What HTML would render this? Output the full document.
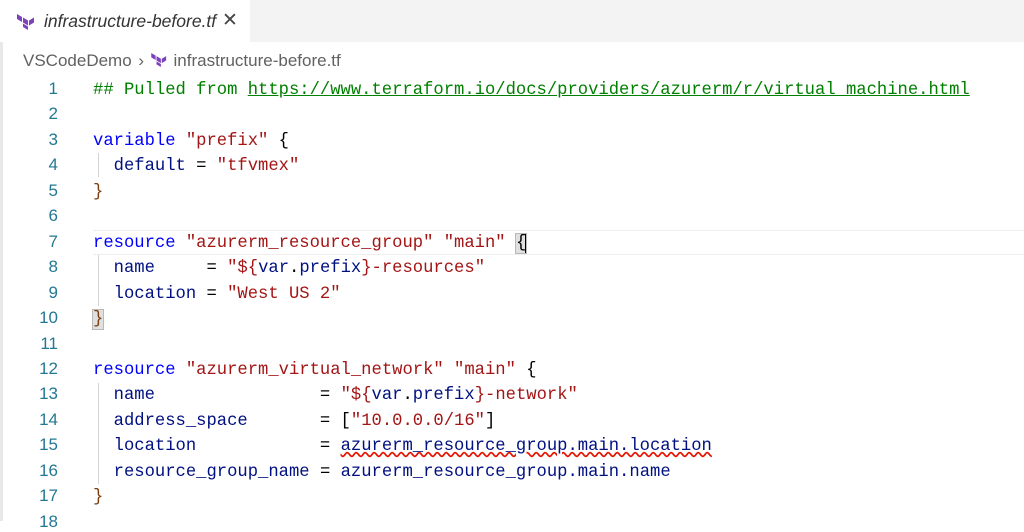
<!DOCTYPE html>
<html><head><meta charset="utf-8"><style>
body{margin:0;width:1024px;height:521px;overflow:hidden;background:#fff;position:relative;font-family:"Liberation Sans",sans-serif}
.tabbar{position:absolute;left:0;top:0;width:1024px;height:42px;background:#f3f3f3}
.tab{position:absolute;left:0;top:0;width:250px;height:42px;background:#fff}
.tab span{position:absolute;left:44px;top:11px;font-size:17.5px;font-style:italic;color:#333}
.tab .x{position:absolute;left:222px;top:9px;font-size:19px;color:#444}
.crumb{position:absolute;left:23px;top:51px;font-size:17px;color:#616161}
.strip{position:absolute;left:0;top:42px;width:3px;height:479px;background:#e8e8e8}
.ln{position:absolute;left:0;width:58px;text-align:right;font-size:17px;color:#237893}
.code{position:absolute;left:93px;font-family:"Liberation Mono",monospace;font-size:17.2px;white-space:pre;color:#000}
.k{color:#0000ff}.s{color:#a31515}.p{color:#001080}.c{color:#008000}.b{color:#7a3e10}
.g{position:absolute;left:98px;width:1px;background:#d3d3d3}
.cur{position:absolute;left:93px;top:230px;width:931px;height:25px;border-top:1px solid #eee;border-bottom:1px solid #eee;box-sizing:border-box}
</style></head><body>
<div class="tabbar"><div class="tab">
<svg style="position:absolute;left:17px;top:14px" width="20" height="16" viewBox="0 0 20 16"><path d="M0 0l5 3v5L0 5z M6 3.5l5 3v5l-5-3z M12 6.5l5-3v5l-5 3z M6 9.5l5 3V16l-5-3z" fill="#7b42bc"/></svg>
<span>infrastructure-before.tf</span><div class="x">✕</div></div></div>
<div class="crumb">VSCodeDemo <span style="margin:0 2px">›</span> <svg width="18" height="14" viewBox="0 0 20 16" style="vertical-align:-1px"><path d="M0 0l5 3v5L0 5z M6 3.5l5 3v5l-5-3z M12 6.5l5-3v5l-5 3z M6 9.5l5 3V16l-5-3z" fill="#7b42bc"/></svg> infrastructure-before.tf</div>
<div class="strip"></div>
<div class="cur"></div>
<div class="g" style="top:153px;height:24px"></div>
<div class="g" style="top:255px;height:51px"></div>
<div class="g" style="top:383px;height:101px"></div>
<div id="l"></div>
<script>
var L=[
'<span class="c">## Pulled from <u style="text-decoration-color:#008000">https://www.terraform.io/docs/providers/azurerm/r/virtual_machine.html</u></span>',
'',
'<span class="k">variable</span> <span class="s">"prefix"</span> {',
'  <span class="p">default</span> = <span class="s">"tfvmex"</span>',
'<span class="b">}</span>',
'',
'<span class="k">resource</span> <span class="s">"azurerm_resource_group"</span> <span class="s">"main"</span> <span style="background:#e0e0e0;outline:1px solid #b9b9b9">{</span><span style="border-left:2px solid #000;margin-left:-1px"></span>',
'  <span class="p">name</span>     = <span class="s">"${</span><span class="p">var</span>.<span class="p">prefix</span><span class="s">}-resources"</span>',
'  <span class="p">location</span> = <span class="s">"West US 2"</span>',
'<span class="b" style="background:#e0e0e0;outline:1px solid #b9b9b9">}</span>',
'',
'<span class="k">resource</span> <span class="s">"azurerm_virtual_network"</span> <span class="s">"main"</span> {',
'  <span class="p">name</span>                = <span class="s">"${</span><span class="p">var</span>.<span class="p">prefix</span><span class="s">}-network"</span>',
'  <span class="p">address_space</span>       = [<span class="s">"10.0.0.0/16"</span>]',
'  <span class="p">location</span>            = <span class="p" style="text-decoration:underline wavy #e51400">azurerm_resource_group.main.location</span>',
'  <span class="p">resource_group_name</span> = <span class="p">azurerm_resource_group.main.name</span>',
'<span class="b">}</span>',
''];
var h='';
for(var i=0;i<18;i++){var t=77+i*25.45;h+='<div class="ln" style="top:'+(t+2)+'px">'+(i+1)+'</div><div class="code" style="top:'+(t+4)+'px">'+L[i]+'</div>';}
document.getElementById('l').innerHTML=h;
</script>
</body></html>
